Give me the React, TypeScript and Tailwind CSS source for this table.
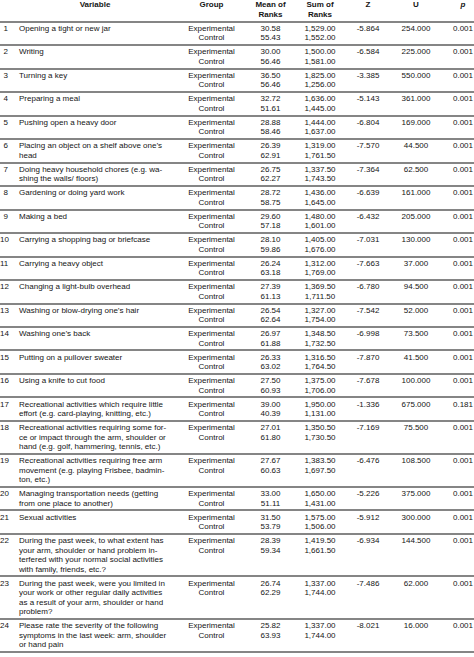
import React from "react";

type Row = {
  n: number;
  v: string[];
  m: [string, string];
  s: [string, string];
  z: string;
  u: string;
  p: string;
};

const rows: Row[] = [
  { n: 1, v: ["Opening a tight or new jar"], m: ["30.58", "55.43"], s: ["1,529.00", "1,552.00"], z: "-5.864", u: "254.000", p: "0.001" },
  { n: 2, v: ["Writing"], m: ["30.00", "56.46"], s: ["1,500.00", "1,581.00"], z: "-6.584", u: "225.000", p: "0.001" },
  { n: 3, v: ["Turning a key"], m: ["36.50", "56.46"], s: ["1,825.00", "1,256.00"], z: "-3.385", u: "550.000", p: "0.001" },
  { n: 4, v: ["Preparing a meal"], m: ["32.72", "51.61"], s: ["1,636.00", "1,445.00"], z: "-5.143", u: "361.000", p: "0.001" },
  { n: 5, v: ["Pushing open a heavy door"], m: ["28.88", "58.46"], s: ["1,444.00", "1,637.00"], z: "-6.804", u: "169.000", p: "0.001" },
  { n: 6, v: ["Placing an object on a shelf above one\u2019s", "head"], m: ["26.39", "62.91"], s: ["1,319.00", "1,761.50"], z: "-7.570", u: "44.500", p: "0.001" },
  { n: 7, v: ["Doing heavy household chores (e.g. wa-", "shing the walls/ floors)"], m: ["26.75", "62.27"], s: ["1,337.50", "1,743.50"], z: "-7.364", u: "62.500", p: "0.001" },
  { n: 8, v: ["Gardening or doing yard work"], m: ["28.72", "58.75"], s: ["1,436.00", "1,645.00"], z: "-6.639", u: "161.000", p: "0.001" },
  { n: 9, v: ["Making a bed"], m: ["29.60", "57.18"], s: ["1,480.00", "1,601.00"], z: "-6.432", u: "205.000", p: "0.001" },
  { n: 10, v: ["Carrying a shopping bag or briefcase"], m: ["28.10", "59.86"], s: ["1,405.00", "1,676.00"], z: "-7.031", u: "130.000", p: "0.001" },
  { n: 11, v: ["Carrying a heavy object"], m: ["26.24", "63.18"], s: ["1,312.00", "1,769.00"], z: "-7.663", u: "37.000", p: "0.001" },
  { n: 12, v: ["Changing a light-bulb overhead"], m: ["27.39", "61.13"], s: ["1,369.50", "1,711.50"], z: "-6.780", u: "94.500", p: "0.001" },
  { n: 13, v: ["Washing or blow-drying one\u2019s hair"], m: ["26.54", "62.64"], s: ["1,327.00", "1,754.00"], z: "-7.542", u: "52.000", p: "0.001" },
  { n: 14, v: ["Washing one\u2019s back"], m: ["26.97", "61.88"], s: ["1,348.50", "1,732.50"], z: "-6.998", u: "73.500", p: "0.001" },
  { n: 15, v: ["Putting on a pullover sweater"], m: ["26.33", "63.02"], s: ["1,316.50", "1,764.50"], z: "-7.870", u: "41.500", p: "0.001" },
  { n: 16, v: ["Using a knife to cut food"], m: ["27.50", "60.93"], s: ["1,375.00", "1,706.00"], z: "-7.678", u: "100.000", p: "0.001" },
  { n: 17, v: ["Recreational activities which require little", "effort (e.g. card-playing, knitting, etc.)"], m: ["39.00", "40.39"], s: ["1,950.00", "1,131.00"], z: "-1.336", u: "675.000", p: "0.181" },
  { n: 18, v: ["Recreational activities requiring some for-", "ce or impact through the arm, shoulder or", "hand (e.g. golf, hammering, tennis, etc.)"], m: ["27.01", "61.80"], s: ["1,350.50", "1,730.50"], z: "-7.169", u: "75.500", p: "0.001" },
  { n: 19, v: ["Recreational activities requiring free arm", "movement (e.g. playing Frisbee, badmin-", "ton, etc.)"], m: ["27.67", "60.63"], s: ["1,383.50", "1,697.50"], z: "-6.476", u: "108.500", p: "0.001" },
  { n: 20, v: ["Managing transportation needs (getting", "from one place to another)"], m: ["33.00", "51.11"], s: ["1,650.00", "1,431.00"], z: "-5.226", u: "375.000", p: "0.001" },
  { n: 21, v: ["Sexual activities"], m: ["31.50", "53.79"], s: ["1,575.00", "1,506.00"], z: "-5.912", u: "300.000", p: "0.001" },
  { n: 22, v: ["During the past week, to what extent has", "your arm, shoulder or hand problem in-", "terfered with your normal social activities", "with family, friends, etc.?"], m: ["28.39", "59.34"], s: ["1,419.50", "1,661.50"], z: "-6.934", u: "144.500", p: "0.001" },
  { n: 23, v: ["During the past week, were you limited in", "your work or other regular daily activities", "as a result of your arm, shoulder or hand", "problem?"], m: ["26.74", "62.29"], s: ["1,337.00", "1,744.00"], z: "-7.486", u: "62.000", p: "0.001" },
  { n: 24, v: ["Please rate the severity of the following", "symptoms in the last week: arm, shoulder", "or hand pain"], m: ["25.82", "63.93"], s: ["1,337.00", "1,744.00"], z: "-8.021", u: "16.000", p: "0.001" },
];

function Lines({ items }: { items: string[] }) {
  return (
    <>
      {items.map((t, i) => (
        <div key={i} className="whitespace-nowrap">
          {t}
        </div>
      ))}
    </>
  );
}

export default function App() {
  return (
    <div
      className="w-[474px] h-[657px] overflow-hidden bg-white text-[#151515] text-[8px] leading-[9.5px]"
      style={{ fontFamily: '"Liberation Sans", Arial, Helvetica, sans-serif' }}
    >
      <div className="flex border-b-2 border-[#858585] pt-[0.3px] pb-[1.4px] font-bold">
        <div className="w-[183px] shrink-0 pl-[7px] text-center">Variable</div>
        <div className="w-[57px] shrink-0 text-center">Group</div>
        <div className="w-[61px] shrink-0 text-center">
          <div>Mean of</div>
          <div>Ranks</div>
        </div>
        <div className="w-[38px] shrink-0 text-center">
          <div>Sum of</div>
          <div>Ranks</div>
        </div>
        <div className="w-[58px] shrink-0 text-center">Z</div>
        <div className="w-[38px] shrink-0 text-center">U</div>
        <div className="w-[56px] shrink-0 text-center italic">p</div>
      </div>
      {rows.map((r) => (
        <div
          key={r.n}
          className="flex border-b-2 border-[#858585] pt-[1.3px] pb-[1.2px]"
        >
          <div className="w-[8px] shrink-0 text-right">{r.n}</div>
          <div className="w-[175px] shrink-0 pl-[11px]">
            <Lines items={r.v} />
          </div>
          <div className="w-[57px] shrink-0 text-center">
            <div>Experimental</div>
            <div>Control</div>
          </div>
          <div className="w-[61px] shrink-0 text-center">
            <Lines items={r.m} />
          </div>
          <div className="w-[38px] shrink-0 text-center">
            <Lines items={r.s} />
          </div>
          <div className="w-[58px] shrink-0 text-center">{r.z}</div>
          <div className="w-[38px] shrink-0 text-center">{r.u}</div>
          <div className="w-[56px] shrink-0 text-center">{r.p}</div>
        </div>
      ))}
    </div>
  );
}
